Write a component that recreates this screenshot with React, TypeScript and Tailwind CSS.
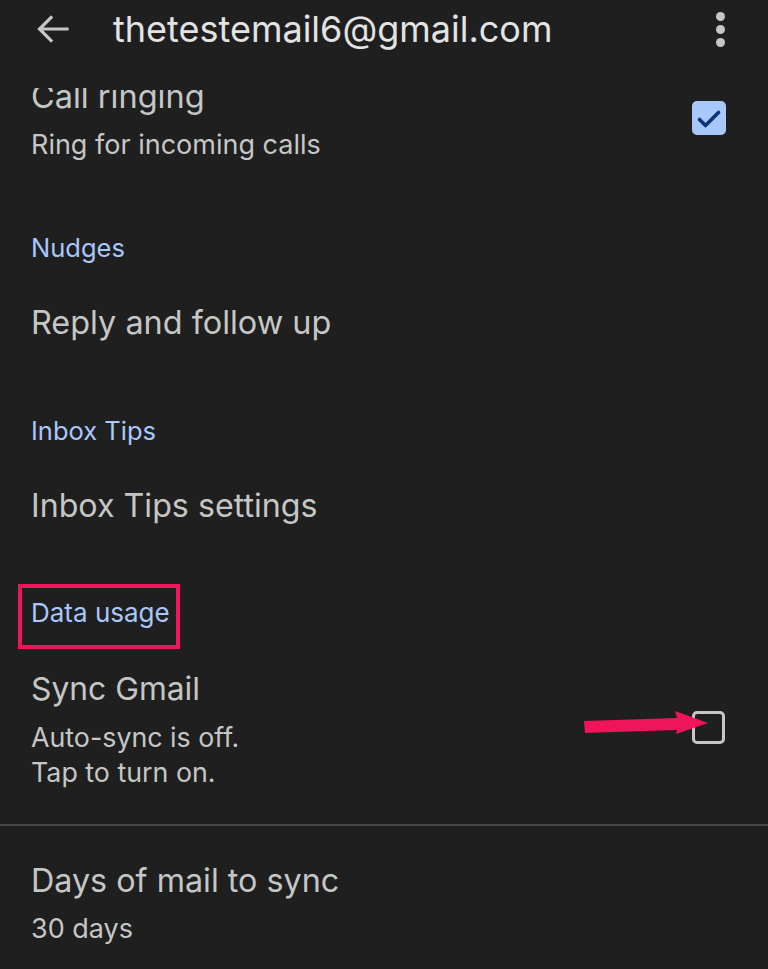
import React from "react";

const font = { fontFamily: "Inter, 'Open Sans', sans-serif" };

function Checked() {
  return (
    <div className="w-[34px] h-[34px] rounded-[5px] bg-[#a8c7fa]">
      <svg width="34" height="34" viewBox="0 0 34 34">
        <path d="M7.5 18.5l6 6 13-13" fill="none" stroke="#0b3478" strokeWidth="3.6" strokeLinecap="round" strokeLinejoin="round" />
      </svg>
    </div>
  );
}

function Unchecked() {
  return <div className="w-[33px] h-[33px] rounded-[5px] border-[3px] border-[#c6c6c6]" />;
}

export default function App() {
  return (
    <div className="w-[768px] h-[969px] bg-[#1f1f1f] overflow-hidden relative flex flex-col" style={font}>
      {/* Header */}
      <div className="h-[88px] shrink-0 flex items-start relative z-10 bg-[#1f1f1f]">
        <div className="flex items-center h-[58px] w-full">
          <div className="w-[113px] pl-[35px] flex items-center">
            <svg width="36" height="36" viewBox="0 0 36 36">
              <path d="M32 18H5M16 6.5L4.5 18 16 29.5" fill="none" stroke="#c4c7c5" strokeWidth="3.2" strokeLinecap="square" />
            </svg>
          </div>
          <div className="text-[36px] leading-[58px] text-[#e3e3e3]">thetestemail6@gmail.com</div>
          <div className="ml-auto mr-[43px] flex flex-col gap-[4px] items-center">
            <span className="w-[9px] h-[9px] rounded-full bg-[#c4c7c5]" />
            <span className="w-[9px] h-[9px] rounded-full bg-[#c4c7c5]" />
            <span className="w-[9px] h-[9px] rounded-full bg-[#c4c7c5]" />
          </div>
        </div>
      </div>

      {/* Content */}
      <div className="flex-1 overflow-hidden">
        <div className="-mt-[8px] flex flex-col">
          {/* Call ringing */}
          <div className="flex items-center pl-[31px] pr-[42px]">
            <div className="flex-1">
              <div className="text-[32.5px] leading-[34px] text-[#c4c7c5]">Call ringing</div>
              <div className="mt-[13px] text-[27px] leading-[36px] text-[#c4c7c5]">Ring for incoming calls</div>
            </div>
            <div className="-mt-[8px]"><Checked /></div>
          </div>

          {/* Nudges */}
          <div className="pl-[31px] mt-[69px] text-[25.5px] leading-[32px] text-[#a8c7fa]">Nudges</div>
          <div className="pl-[31px] mt-[39px] text-[32.4px] leading-[40px] text-[#c4c7c5]">Reply and follow up</div>

          {/* Inbox tips */}
          <div className="pl-[31px] mt-[72px] text-[25.5px] leading-[32px] text-[#a8c7fa]">Inbox Tips</div>
          <div className="pl-[31px] mt-[39px] text-[32.2px] leading-[40px] text-[#c4c7c5]">Inbox Tips settings</div>

          {/* Data usage */}
          <div className="pl-[31px] mt-[71px] text-[26px] leading-[32px] text-[#a8c7fa]">
            <span className="relative inline-block">
              Data usage
              <span className="absolute left-[-13px] right-[-10px] top-[-13px] bottom-[-20px] border-[4px] border-[#f0145a]" />
            </span>
          </div>

          {/* Sync Gmail */}
          <div className="flex items-center pl-[31px] pr-[43px] mt-[40px] relative">
            <div className="flex-1">
              <div className="text-[31.8px] leading-[40px] text-[#c4c7c5]">Sync Gmail</div>
              <div className="mt-[11px] text-[26.8px] leading-[35px] text-[#c4c7c5]">Auto-sync is off.</div>
              <div className="text-[26.8px] leading-[35px] text-[#c4c7c5]">Tap to turn on.</div>
            </div>
            <div className="mt-[-4px]"><Unchecked /></div>
            <svg className="absolute left-[580px] top-[36px]" width="132" height="30" viewBox="580 705 132 30">
              <polygon points="584,721 677,718 675,711 708,723 676,734 677,730 585,733" fill="#f0145a" />
            </svg>
          </div>

          <div className="mt-[34px] h-[2px] bg-[#474747]" />

          {/* Days of mail */}
          <div className="pl-[31px] mt-[35px]">
            <div className="text-[32.3px] leading-[40px] text-[#c4c7c5]">Days of mail to sync</div>
            <div className="mt-[10px] text-[27px] leading-[36px] text-[#c4c7c5]">30 days</div>
          </div>
        </div>
      </div>
    </div>
  );
}
